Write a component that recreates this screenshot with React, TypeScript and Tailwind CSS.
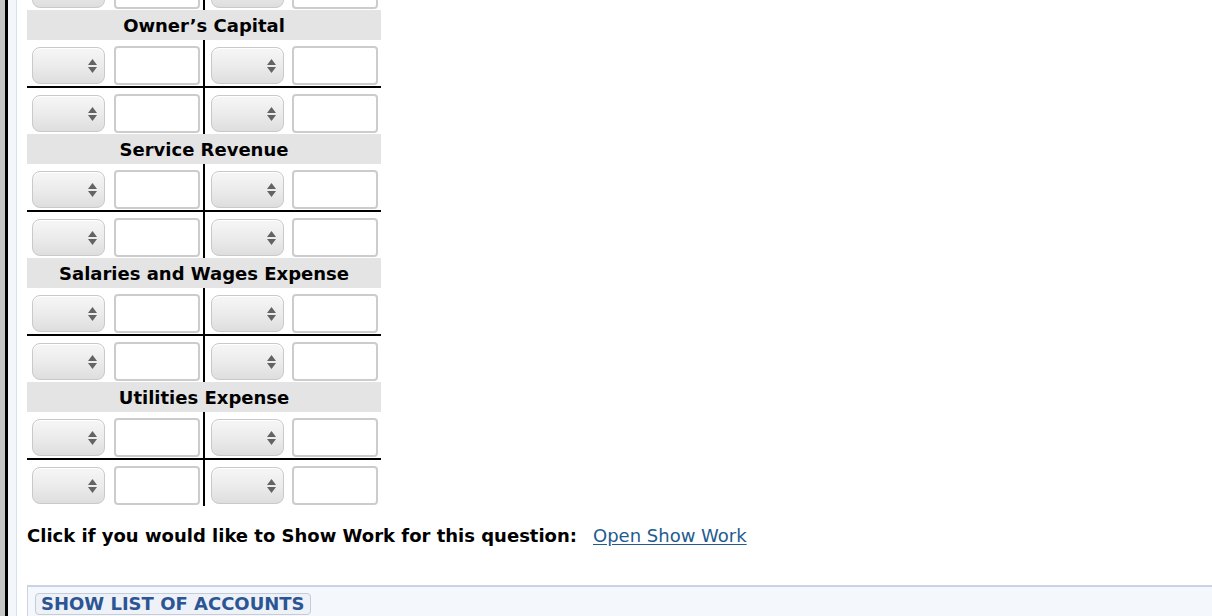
import React from 'react';

const accounts = ["Owner’s Capital", 'Service Revenue', 'Salaries and Wages Expense', 'Utilities Expense'];

function Select() {
  return (
    <div className="relative mt-[7px] h-[37px] w-[73px] rounded-[8px] border border-[#c9c9c9] bg-gradient-to-b from-[#f6f6f6] via-[#ececec] to-[#dedede] shadow-[inset_0_1px_0_#ffffff]">
      <svg className="absolute right-[6px] top-[10px]" width="11" height="16" viewBox="0 0 11 16">
        <path d="M5.5 1 L10 7 L1 7 Z" fill="#636363" />
        <path d="M5.5 15 L10 9 L1 9 Z" fill="#636363" />
      </svg>
    </div>
  );
}

function Input() {
  return <div className="mt-[6px] h-[39px] w-[86px] rounded-[4px] border-2 border-[#cccccc] bg-white" />;
}

function Cell({ right }: { right?: boolean }) {
  return (
    <div className={right ? 'flex h-[46px] w-[176px] pl-[6px]' : 'flex h-[46px] w-[176px] pl-[5px]'}>
      <Select />
      <div className={right ? 'ml-[8px]' : 'ml-[9px]'}>
        <Input />
      </div>
    </div>
  );
}

function Row() {
  return (
    <div className="flex">
      <Cell />
      <div className="w-[2px] bg-black" />
      <Cell right />
    </div>
  );
}

function Account({ name }: { name: string }) {
  return (
    <div>
      <div className="flex h-[30px] items-center justify-center bg-[#e4e4e4] pt-[1px] text-[18px] leading-[22px] font-bold text-black">
        {name}
      </div>
      <Row />
      <div className="h-[2px] bg-black" />
      <Row />
    </div>
  );
}

export default function App() {
  return (
    <div className="flex h-[616px] w-[1212px] overflow-hidden bg-white font-['DejaVu_Sans',sans-serif]">
      <div className="w-[5px] shrink-0 bg-[#c6c6c6]" />
      <div className="w-[3px] shrink-0 bg-black" />
      <div className="w-[8px] shrink-0 bg-[#f3f7fb]" />
      <div className="w-[1px] shrink-0 bg-[#d5e1ee]" />
      <div className="flex min-w-0 flex-1 flex-col pl-[10px]">
        <div className="w-[354px]">
          <div className="h-[10px] overflow-hidden">
            <div className="-mt-[36px]">
              <Row />
            </div>
          </div>
          {accounts.map((a) => (
            <Account key={a} name={a} />
          ))}
        </div>
        <div className="mt-[20px] flex items-center text-[18px] leading-[20px]">
          <span className="font-bold text-black">Click if you would like to Show Work for this question:</span>
          <a href="#" className="ml-[16px] text-[#235b8e] underline underline-offset-2">
            Open Show Work
          </a>
        </div>
        <div className="mt-[39px] flex-1 border-l border-t-2 border-[#cbd3de] bg-[#f4f7fb] pl-[7px] pt-[6px]">
          <button className="h-[22px] rounded-[4px] border border-[#c4ccd8] bg-[#eef2f8] px-[5px] text-[18px] leading-[20px] font-bold text-[#2b5593]">
            SHOW LIST OF ACCOUNTS
          </button>
        </div>
      </div>
    </div>
  );
}
